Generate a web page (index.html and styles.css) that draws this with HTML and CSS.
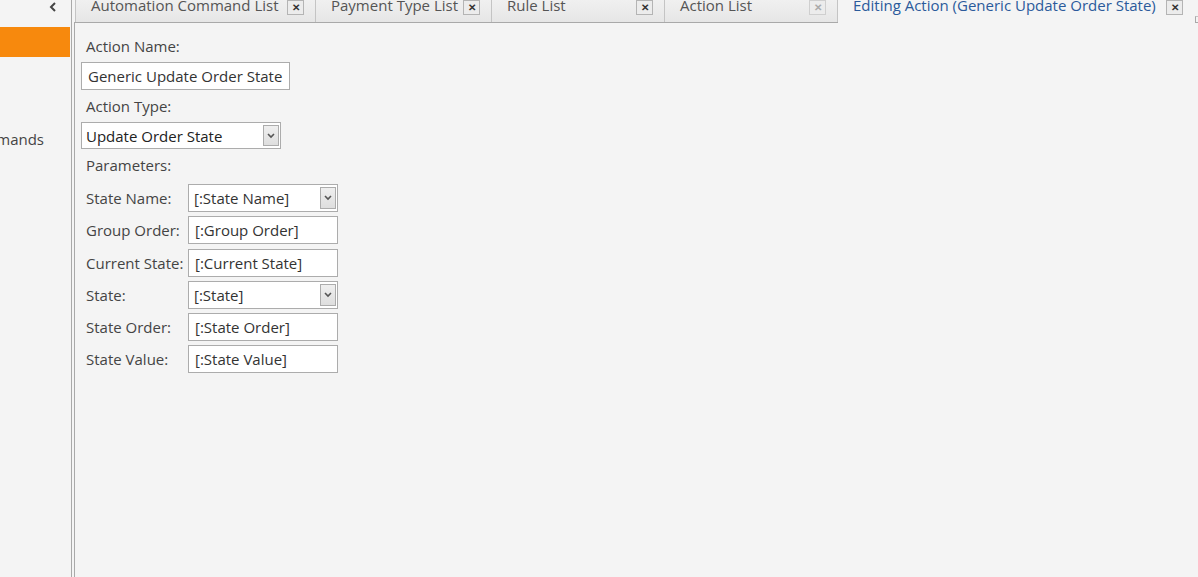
FILE: index.html
```html
<!DOCTYPE html>
<html lang="en">
<head>
    <meta charset="UTF-8">
    <title>Editing Action</title>
    <link rel="stylesheet" href="styles.css">
</head>
<body>
<div class="app">
    <div class="sidebar">
        <div class="collapse">
            <svg width="8" height="10" viewBox="0 0 8 10"><polyline points="6,1 2,5 6,9" fill="none" stroke="#444" stroke-width="2"/></svg>
        </div>
        <div class="nav-active"></div>
        <div class="nav-item"><span>Automation Commands</span></div>
    </div>
    <div class="main">
        <div class="tabs">
            <div class="tab w1"><span>Automation Command List</span><i class="close">&#x2715;</i></div>
            <div class="tab w2"><span>Payment Type List</span><i class="close">&#x2715;</i></div>
            <div class="tab w3"><span>Rule List</span><i class="close">&#x2715;</i></div>
            <div class="tab w4"><span>Action List</span><i class="close off">&#x2715;</i></div>
            <div class="tab active"><span>Editing Action (Generic Update Order State)</span><i class="close">&#x2715;</i></div>
            <div class="tab-rest"></div>
        </div>
        <div class="content">
            <div class="label">Action Name:</div>
            <div class="textbox wide">Generic Update Order State</div>
            <div class="label">Action Type:</div>
            <div class="combo type"><span>Update Order State</span><b class="drop"><svg width="8" height="6" viewBox="0 0 8 6"><polyline points="1,1 4,4 7,1" fill="none" stroke="#555" stroke-width="1.6"/></svg></b></div>
            <div class="label">Parameters:</div>
            <div class="params">
                <div class="plabel">State Name:</div>
                <div class="combo pfield"><span>[:State Name]</span><b class="drop"><svg width="8" height="6" viewBox="0 0 8 6"><polyline points="1,1 4,4 7,1" fill="none" stroke="#555" stroke-width="1.6"/></svg></b></div>
                <div class="plabel">Group Order:</div>
                <div class="textbox pfield">[:Group Order]</div>
                <div class="plabel">Current State:</div>
                <div class="textbox pfield">[:Current State]</div>
                <div class="plabel">State:</div>
                <div class="combo pfield"><span>[:State]</span><b class="drop"><svg width="8" height="6" viewBox="0 0 8 6"><polyline points="1,1 4,4 7,1" fill="none" stroke="#555" stroke-width="1.6"/></svg></b></div>
                <div class="plabel">State Order:</div>
                <div class="textbox pfield">[:State Order]</div>
                <div class="plabel">State Value:</div>
                <div class="textbox pfield">[:State Value]</div>
            </div>
        </div>
    </div>
</div>
</body>
</html>
```
FILE: styles.css
```css
*{
    margin: 0;
    padding: 0;
    box-sizing: border-box;
}
body{
    background: #f4f4f4;
    font-family: "Open Sans", "Liberation Sans", sans-serif;
    font-size: 15px;
    color: #444;
    overflow: hidden;
}
.app{
    display: flex;
    height: 577px;
}
.sidebar{
    width: 72px;
    border-right: 1px solid #a9a9a9;
    overflow: hidden;
    flex-shrink: 0;
}
.collapse{
    height: 27px;
    display: flex;
    justify-content: flex-end;
    padding: 2px 14px 0 0;
}
.nav-active{
    height: 30px;
    width: 70px;
    background: #f7890d;
}
.nav-item{
    display: flex;
    justify-content: flex-end;
    padding: 72px 27px 0 0;
    overflow: hidden;
    line-height: 20px;
}
.nav-item span{
    white-space: nowrap;
    flex-shrink: 0;
}
.main{
    flex: 1;
    margin-left: 2px;
    display: flex;
    flex-direction: column;
}
.tabs{
    display: flex;
    height: 23px;
    padding-left: 1px;
    border-bottom: 1px solid #a9a9a9;
}
.tab{
    display: flex;
    height: 22px;
    padding: 0 11px 0 15px;
    border-right: 1px solid #c4c4c4;
    background: linear-gradient(#f0f0f0, #e6e6e6);
    color: #555;
    line-height: 14px;
    white-space: nowrap;
}
.tab span{
    flex: 1;
    margin-top: -2px;
}
.tab.w1{
    width: 241px;
    border-left: 1px solid #c4c4c4;
}
.tab.w2{ width: 176px; }
.tab.w3{ width: 173px; }
.tab.w4{ width: 173px; }
.tab.active{
    width: 357px;
    height: 23px;
    padding-right: 12px;
    background: #f4f4f4;
    color: #2b5a9b;
    border-right: none;
}
.tab-rest{
    flex: 1;
    margin-top: 16px;
    border-top: 1px solid #c4c4c4;
    border-left: 1px solid #a9a9a9;
}
.close{
    width: 17px;
    height: 15px;
    border: 1px solid #b4b4b4;
    background: #ececec;
    font-style: normal;
    font-size: 10px;
    font-weight: bold;
    line-height: 13px;
    text-align: center;
    color: #333;
}
.close.off{
    color: #aaa;
    border-color: #cfcfcf;
}
.content{
    flex: 1;
    border-left: 1px solid #a9a9a9;
    padding: 13px 0 0 6px;
}
.label{
    padding-left: 5px;
    line-height: 20px;
    margin-bottom: 6px;
}
.textbox,
.combo{
    height: 28px;
    border: 1px solid #acacac;
    background: #fff;
    color: #333;
    line-height: 26px;
    white-space: nowrap;
    margin-bottom: 6px;
}
.textbox{
    padding-left: 6px;
}
.wide{
    width: 209px;
}
.combo{
    display: flex;
    padding: 2px 1px 2px 4px;
    line-height: 22px;
    color: #222;
}
.combo span{
    flex: 1;
}
.type{
    width: 200px;
    height: 27px;
}
.drop{
    width: 16px;
    border: 1px solid #acacac;
    background: linear-gradient(#efefef, #dedede);
    display: flex;
    align-items: center;
    justify-content: center;
}
.params{
    display: grid;
    grid-template-columns: 107px 150px;
    grid-auto-rows: 28px;
    row-gap: 4.25px;
    padding-top: 3px;
}
.plabel{
    padding-left: 5px;
    line-height: 28px;
    white-space: nowrap;
}
.pfield{
    margin-bottom: 0;
    color: #333;
}
.textbox.pfield{
    padding-left: 6px;
}
.combo.pfield{
    padding-left: 5px;
}
```
